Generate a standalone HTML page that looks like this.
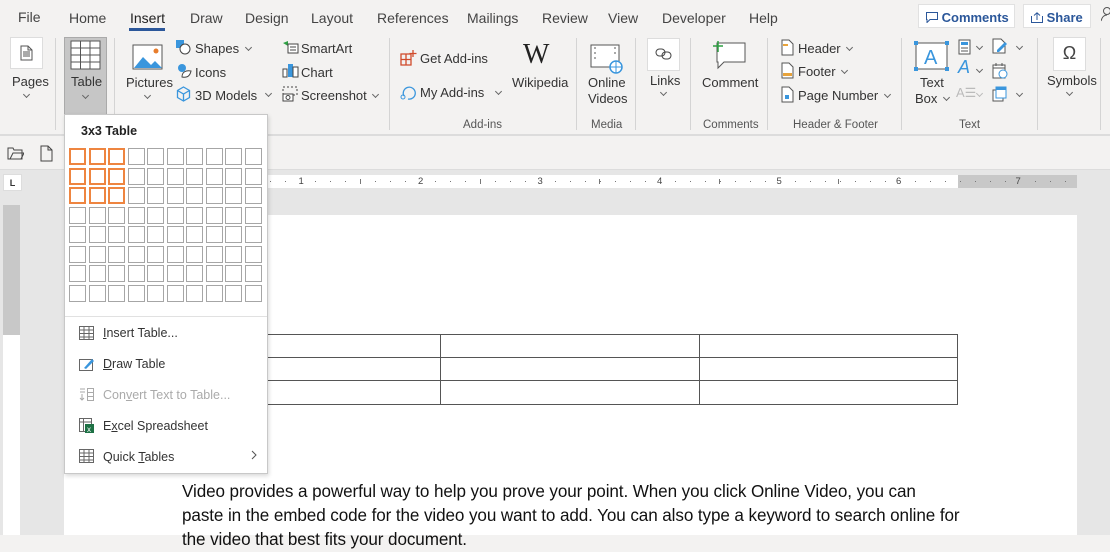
<!DOCTYPE html>
<html><head><meta charset="utf-8"><style>
*{margin:0;padding:0;box-sizing:border-box}
body{width:1110px;height:535px;overflow:hidden;position:relative;background:#f3f2f1;font-family:"Liberation Sans",sans-serif;color:#333;font-size:13px}
.a{position:absolute;white-space:nowrap}
.t{font-size:14px;color:#444}
.sep{position:absolute;width:1px;background:#d4d4d4;top:38px;height:92px}
.gl{position:absolute;top:119px;font-size:11.5px;color:#555}
.chev{display:inline-block;width:5px;height:5px;border-right:1px solid #666;border-bottom:1px solid #666;transform:rotate(45deg);vertical-align:3px;margin-left:3px}
.a.chev{margin:0}
.cell{position:absolute;width:17px;height:17px;border:1px solid #a6a6a6;background:#fff}
.cell.o{border:2px solid #ee8540;background:#fff}
.mi{position:absolute;left:103px;font-size:12.5px;color:#333}
.hl{position:absolute;height:1px;background:#555}
.vl{position:absolute;width:1px;background:#555}
.rn{position:absolute;top:176px;font-size:9.5px;color:#444}
.rd{position:absolute;top:181px;width:1px;height:1px;background:#777}
</style></head><body>
<!-- tab bar -->
<div class="a t" style="left:18px;top:9px">File</div>
<div class="a t" style="left:69px;top:10px">Home</div>
<div class="a t" style="left:130px;top:10px;color:#222">Insert</div>
<div class="a" style="left:129px;top:28px;width:36px;height:3px;background:#2b579a"></div>
<div class="a t" style="left:190px;top:10px">Draw</div>
<div class="a t" style="left:245px;top:10px">Design</div>
<div class="a t" style="left:311px;top:10px">Layout</div>
<div class="a t" style="left:377px;top:10px">References</div>
<div class="a t" style="left:467px;top:10px">Mailings</div>
<div class="a t" style="left:542px;top:10px">Review</div>
<div class="a t" style="left:608px;top:10px">View</div>
<div class="a t" style="left:662px;top:10px">Developer</div>
<div class="a t" style="left:749px;top:10px">Help</div>
<div class="a" style="left:918px;top:4px;width:97px;height:24px;background:#fff;border:1px solid #e1e1e1;color:#2b579a;font-size:13px;font-weight:bold;padding:5px 0 0 7px"><svg width="12" height="11" style="vertical-align:-1px"><path d="M.5 .5h11v7H4l-3 3v-3H.5z" fill="none" stroke="#2b579a"/></svg> Comments</div>
<div class="a" style="left:1023px;top:4px;width:68px;height:24px;background:#fff;border:1px solid #e1e1e1;color:#2b579a;font-size:13px;font-weight:bold;padding:5px 0 0 7px"><svg width="12" height="11" style="vertical-align:-1px"><path d="M.5 4v6.5h11V4M6 8V1M3 3.5L6 .8 9 3.5" fill="none" stroke="#2b579a"/></svg> Share</div>
<svg class="a" style="left:1101px;top:6px" width="9" height="16"><circle cx="6" cy="5" r="3.5" fill="none" stroke="#555"/><path d="M0 15c1-4 3-6 6-6" fill="none" stroke="#555"/></svg>

<!-- ribbon -->
<div class="a" style="left:0;top:134px;width:1110px;height:2px;background:#dcdcdc"></div>
<div class="a" style="left:10px;top:37px;width:33px;height:32px;background:#fff;border:1px solid #ddd"></div>
<svg class="a" style="left:20px;top:45px" width="13" height="16"><path d="M1 1h7l4 4v10H1z M8 1v4h4 M3 7h7M3 9h7M3 11h7" fill="none" stroke="#555"/></svg>
<div class="a" style="left:12px;top:74px;font-size:13px">Pages</div>
<div class="a chev" style="left:24px;top:92px"></div>
<div class="sep" style="left:55px"></div>
<div class="a" style="left:64px;top:37px;width:43px;height:78px;background:#c6c6c6;border:1px solid #aaa"></div>
<svg class="a" style="left:70px;top:40px" width="31" height="30"><rect x="1" y="1" width="29" height="28" fill="#fff" stroke="#555"/><path d="M1 8h29M1 15h29M1 22h29M10.5 1v28M20 1v28" stroke="#555"/></svg>
<div class="a" style="left:71px;top:74px;font-size:13px">Table</div>
<div class="a chev" style="left:83px;top:93px"></div>
<div class="sep" style="left:114px"></div>
<svg class="a" style="left:132px;top:44px" width="31" height="26"><rect x="1" y="1" width="29" height="24" fill="#fff" stroke="#555"/><path d="M2 24l9-11 8 8 4-4 7 7z" fill="#3a96dd"/><circle cx="24" cy="7" r="2.5" fill="#e87d2c"/></svg>
<div class="a" style="left:126px;top:75px;font-size:13px">Pictures</div>
<div class="a chev" style="left:145px;top:93px"></div>
<svg class="a" style="left:175px;top:39px" width="16" height="16"><rect x="1" y="1" width="8" height="8" fill="#3a96dd"/><circle cx="10" cy="10" r="5" fill="#fff" stroke="#444"/></svg>
<div class="a" style="left:195px;top:41px">Shapes <span class="chev"></span></div>
<svg class="a" style="left:176px;top:63px" width="16" height="16"><circle cx="6" cy="5" r="4" fill="#3a96dd"/><path d="M6 14c0-5 4-7 9-6-1 5-4 7-9 6z" fill="#fff" stroke="#444"/></svg>
<div class="a" style="left:195px;top:65px">Icons</div>
<svg class="a" style="left:176px;top:86px" width="15" height="16"><path d="M7.5 1l6 3.5v7l-6 3.5-6-3.5v-7zM1.5 4.5l6 3.5 6-3.5M7.5 8v7" fill="none" stroke="#3a96dd" stroke-width="1.3"/></svg>
<div class="a" style="left:195px;top:88px">3D Models</div>
<div class="a chev" style="left:266px;top:91px"></div>
<svg class="a" style="left:282px;top:40px" width="17" height="14"><path d="M1 3l5 -2v5z" fill="#2ea043"/><rect x="6" y="4" width="10" height="9" fill="#fff" stroke="#444"/><path d="M8 7h6M8 10h6" stroke="#444"/></svg>
<div class="a" style="left:301px;top:41px">SmartArt</div>
<svg class="a" style="left:282px;top:63px" width="17" height="15"><rect x="1" y="6" width="4" height="8" fill="#fff" stroke="#444"/><rect x="6" y="1" width="5" height="13" fill="#3a96dd"/><rect x="11" y="4" width="5" height="10" fill="#fff" stroke="#444"/></svg>
<div class="a" style="left:301px;top:65px">Chart</div>
<svg class="a" style="left:282px;top:86px" width="17" height="16"><rect x="1" y="1" width="14" height="8" fill="none" stroke="#444" stroke-dasharray="2 2"/><rect x="1" y="8" width="10" height="7" fill="#fff" stroke="#444"/><circle cx="6" cy="11.5" r="2" fill="none" stroke="#444"/></svg>
<div class="a" style="left:301px;top:88px">Screenshot <span class="chev"></span></div>
<div class="gl" style="left:209px">Illustrations</div>
<div class="sep" style="left:389px"></div>
<svg class="a" style="left:400px;top:49px" width="17" height="17"><path d="M1 5h10v11H1zM1 10.5h10M6 5v11M13 1v7M9.5 4.5h7" fill="none" stroke="#d04a2a" stroke-width="1.3"/></svg>
<div class="a" style="left:420px;top:51px">Get Add-ins</div>
<svg class="a" style="left:400px;top:84px" width="17" height="17"><path d="M4 12a6 6 0 1 1 4 3" fill="none" stroke="#3a96dd" stroke-width="1.3"/><circle cx="3" cy="13" r="2" fill="none" stroke="#3a96dd"/></svg>
<div class="a" style="left:420px;top:85px">My Add-ins</div>
<div class="a chev" style="left:496px;top:89px"></div>
<div class="a" style="left:523px;top:39px;font-family:'Liberation Serif',serif;font-size:28px;color:#222">W</div>
<div class="a" style="left:512px;top:75px">Wikipedia</div>
<div class="gl" style="left:463px">Add-ins</div>
<div class="sep" style="left:576px"></div>
<svg class="a" style="left:590px;top:44px" width="34" height="30"><rect x="1" y="1" width="28" height="22" fill="#fff" stroke="#555"/><path d="M5 3v2M5 8v2M5 13v2M25 3v2M25 8v2" stroke="#555"/><circle cx="26" cy="23" r="6" fill="#fff" stroke="#3a96dd" stroke-width="1.5"/><path d="M20 23h12M26 17v12" stroke="#3a96dd"/></svg>
<div class="a" style="left:588px;top:75px">Online</div>
<div class="a" style="left:588px;top:91px">Videos</div>
<div class="gl" style="left:591px">Media</div>
<div class="sep" style="left:635px"></div>
<div class="a" style="left:647px;top:38px;width:33px;height:33px;background:#fff;border:1px solid #ddd"></div>
<svg class="a" style="left:655px;top:48px" width="17" height="12"><rect x="1" y="1" width="9" height="7" rx="3.5" fill="none" stroke="#444"/><rect x="7" y="4" width="9" height="7" rx="3.5" fill="none" stroke="#444"/></svg>
<div class="a" style="left:650px;top:73px">Links</div>
<div class="a chev" style="left:661px;top:90px"></div>
<div class="sep" style="left:690px"></div>
<svg class="a" style="left:712px;top:40px" width="34" height="32"><path d="M5 3h28v19H12l-6 6v-6H5z" fill="#fff" stroke="#555"/><path d="M1 6h10M6 1v11" stroke="#2ea043" stroke-width="1.5"/></svg>
<div class="a" style="left:702px;top:75px">Comment</div>
<div class="gl" style="left:703px">Comments</div>
<div class="sep" style="left:767px"></div>
<svg class="a" style="left:781px;top:39px" width="13" height="17"><path d="M1 1h7l4 4v11H1z" fill="#fff" stroke="#555"/><rect x="2" y="5" width="5" height="2" fill="#e8a33a"/></svg>
<div class="a" style="left:798px;top:41px">Header <span class="chev"></span></div>
<svg class="a" style="left:781px;top:62px" width="13" height="17"><path d="M1 1h7l4 4v11H1z" fill="#fff" stroke="#555"/><rect x="2" y="11" width="9" height="3" fill="#e8a33a"/></svg>
<div class="a" style="left:798px;top:64px">Footer <span class="chev"></span></div>
<svg class="a" style="left:781px;top:86px" width="13" height="17"><path d="M1 1h7l4 4v11H1z" fill="#fff" stroke="#555"/><rect x="4" y="9" width="4" height="4" fill="#3a96dd"/></svg>
<div class="a" style="left:798px;top:88px">Page Number <span class="chev"></span></div>
<div class="gl" style="left:793px">Header &amp; Footer</div>
<div class="sep" style="left:901px"></div>
<svg class="a" style="left:914px;top:41px" width="36" height="30"><rect x="2" y="2" width="31" height="26" fill="#fff" stroke="#555"/><g fill="#3a96dd"><rect x="0" y="0" width="4" height="4"/><rect x="31" y="0" width="4" height="4"/><rect x="0" y="26" width="4" height="4"/><rect x="31" y="26" width="4" height="4"/></g><text x="10" y="23" font-family="Liberation Sans" font-size="20" fill="#3a96dd">A</text></svg>
<div class="a" style="left:920px;top:75px">Text</div>
<div class="a" style="left:915px;top:91px">Box <span class="chev"></span></div>
<svg class="a" style="left:958px;top:39px" width="13" height="16"><rect x="1" y="1" width="11" height="14" fill="#fff" stroke="#555"/><rect x="3" y="3" width="7" height="3" fill="#3a96dd"/><path d="M3 9h7M3 12h7" stroke="#555"/></svg>
<div class="a chev" style="left:977px;top:44px"></div>
<div class="a" style="left:958px;top:57px;color:#3a96dd;font-size:18px;font-style:italic">A</div>
<div class="a chev" style="left:977px;top:67px"></div>
<div class="a" style="left:956px;top:85px;color:#bbb;font-size:13px">A☰</div>
<div class="a chev" style="left:977px;top:91px;border-color:#bbb"></div>
<svg class="a" style="left:992px;top:38px" width="16" height="16"><path d="M1 1h8l4 4v10H1z" fill="#fff" stroke="#555"/><path d="M5 12l8-8 2 2-8 8H5z" fill="#3a96dd"/></svg>
<div class="a chev" style="left:1017px;top:44px"></div>
<svg class="a" style="left:992px;top:62px" width="16" height="17"><rect x="1" y="3" width="12" height="13" fill="#fff" stroke="#555"/><path d="M1 6h12M4 1v3M10 1v3" stroke="#555"/><circle cx="11" cy="12" r="4" fill="#fff" stroke="#3a96dd"/></svg>
<svg class="a" style="left:992px;top:86px" width="15" height="16"><rect x="1" y="4" width="10" height="11" fill="#fff" stroke="#555"/><rect x="4" y="1" width="10" height="11" fill="#fff" stroke="#3a96dd"/><rect x="4" y="1" width="10" height="3" fill="#3a96dd"/></svg>
<div class="a chev" style="left:1017px;top:91px"></div>
<div class="gl" style="left:959px">Text</div>
<div class="sep" style="left:1037px"></div>
<div class="a" style="left:1053px;top:37px;width:33px;height:34px;background:#fff;border:1px solid #ddd;text-align:center;padding-top:5px;font-size:18px;color:#444">Ω</div>
<div class="a" style="left:1047px;top:73px">Symbols</div>
<div class="a chev" style="left:1067px;top:90px"></div>
<div class="sep" style="left:1100px"></div>

<!-- QAT -->
<svg class="a" style="left:7px;top:146px" width="17" height="14"><path d="M1 2h5l1 2h8v9H1z M3 13l3-6h11l-3 6" fill="none" stroke="#444"/></svg>
<svg class="a" style="left:40px;top:145px" width="13" height="17"><path d="M1 1h7l4 4v11H1z M8 1v4h4" fill="none" stroke="#444"/></svg>
<div class="a" style="left:0;top:169px;width:1110px;height:1px;background:#dcdcdc"></div>

<!-- doc area -->
<div class="a" style="left:0;top:170px;width:1110px;height:365px;background:#e6e6e6"></div>
<div class="a" style="left:3px;top:174px;width:19px;height:17px;background:#fff;border:1px solid #ddd;font-size:9px;text-align:center;padding-top:3px;font-weight:bold">L</div>
<div class="a" style="left:64px;top:175px;width:894px;height:13px;background:#fff"></div>
<div class="a" style="left:958px;top:175px;width:119px;height:13px;background:#c8c8c8"></div>
<div id="ru"></div>
<div class="a" style="left:3px;top:205px;width:17px;height:330px;background:#fff"></div>
<div class="a" style="left:3px;top:205px;width:17px;height:130px;background:#c8c8c8"></div>
<div class="a" style="left:64px;top:215px;width:1013px;height:320px;background:#fff"></div>

<!-- document table -->
<div class="hl" style="left:182px;top:334px;width:776px"></div>
<div class="hl" style="left:182px;top:357px;width:776px"></div>
<div class="hl" style="left:182px;top:380px;width:776px"></div>
<div class="hl" style="left:182px;top:404px;width:776px"></div>
<div class="vl" style="left:440px;top:334px;height:71px"></div>
<div class="vl" style="left:699px;top:334px;height:71px"></div>
<div class="vl" style="left:957px;top:334px;height:71px"></div>
<div class="a" style="left:182px;top:480px;font-size:17.1px;color:#111;line-height:24px;letter-spacing:-0.1px">Video provides a powerful way to help you prove your point. When you click Online Video, you can<br>paste in the embed code for the video you want to add. You can also type a keyword to search online for<br>the video that best fits your document.</div>

<!-- dropdown -->
<div class="a" style="left:64px;top:114px;width:204px;height:360px;background:#fff;border:1px solid #c8c8c8;box-shadow:1px 2px 4px rgba(0,0,0,.15)"></div>
<div class="a" style="left:81px;top:124px;font-weight:bold;font-size:12.5px;color:#222">3x3 Table</div>
<div id="g"></div>
<div class="a" style="left:65px;top:316px;width:202px;height:1px;background:#e1e1e1"></div>
<svg class="a" style="left:79px;top:326px" width="15" height="14"><rect x=".5" y=".5" width="14" height="13" fill="#fff" stroke="#666"/><path d="M.5 4h14M.5 7.5h14M.5 11h14M5 .5v13M10 .5v13" stroke="#666"/></svg>
<div class="mi" style="top:326px"><u>I</u>nsert Table...</div>
<svg class="a" style="left:79px;top:357px" width="15" height="14"><rect x=".5" y="2.5" width="13" height="11" fill="#fff" stroke="#666"/><path d="M5 11l8-9 2 2-8 8z" fill="#3a96dd"/></svg>
<div class="mi" style="top:357px"><u>D</u>raw Table</div>
<svg class="a" style="left:79px;top:388px" width="15" height="14"><path d="M1 1h5M1 4h5M3 6v6M1 10l2 2 2-2" fill="none" stroke="#aaa"/><rect x="8.5" y=".5" width="6" height="12" fill="none" stroke="#aaa"/><path d="M8.5 4.5h6M8.5 8.5h6" stroke="#aaa"/></svg>
<div class="mi" style="top:388px;color:#aaa">Con<u>v</u>ert Text to Table...</div>
<svg class="a" style="left:79px;top:418px" width="15" height="15"><rect x=".5" y=".5" width="12" height="13" fill="#fff" stroke="#666"/><path d="M.5 4h12M4.5 .5v13" stroke="#666"/><rect x="6" y="6" width="9" height="9" fill="#1e7145"/><text x="8" y="14" font-size="8" fill="#fff" font-family="Liberation Sans">x</text></svg>
<div class="mi" style="top:419px">E<u>x</u>cel Spreadsheet</div>
<svg class="a" style="left:79px;top:449px" width="15" height="14"><rect x=".5" y=".5" width="14" height="13" fill="#fff" stroke="#666"/><path d="M.5 4h14M.5 7.5h14M.5 11h14M5 .5v13M10 .5v13" stroke="#666"/></svg>
<div class="mi" style="top:450px">Quick <u>T</u>ables</div>
<svg class="a" style="left:251px;top:450px" width="6" height="10"><path d="M1 1l4 4-4 4" fill="none" stroke="#555"/></svg>
<script>
var h='';for(var r=0;r<8;r++)for(var c=0;c<10;c++){var o=(r<3&&c<3);h+='<div class="cell'+(o?' o':'')+'" style="left:'+(69+c*19.5)+'px;top:'+(148+r*19.5)+'px"></div>';}
document.getElementById('g').outerHTML=h;
var s='';for(var x=270;x<1075;x+=15){if(Math.abs((x-181)-Math.round((x-181)/119.5)*119.5)<7)continue;s+='<div class="rd" style="left:'+x+'px"></div>';}
for(var i=1;i<=7;i++){s+='<div class="rn" style="left:'+(179+i*119.5)+'px">'+i+'</div>';}
s+='<div class="rd" style="left:360px;top:179px;height:5px"></div><div class="rd" style="left:480px;top:179px;height:5px"></div><div class="rd" style="left:599px;top:179px;height:5px"></div><div class="rd" style="left:719px;top:179px;height:5px"></div><div class="rd" style="left:838px;top:179px;height:5px"></div>';
document.getElementById('ru').outerHTML=s;
</script>
</body></html>
